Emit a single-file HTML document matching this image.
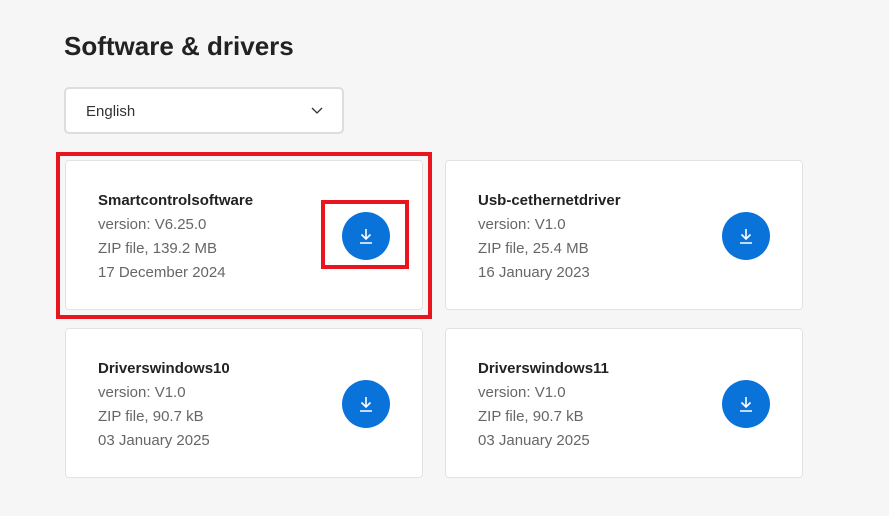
<!DOCTYPE html>
<html><head><style>
body{margin:0;width:889px;height:516px;background:#f6f6f6;font-family:"Liberation Sans",sans-serif;position:relative;overflow:hidden}
h1{position:absolute;left:64px;top:31px;margin:0;font-size:26px;font-weight:bold;color:#222}
.sel{position:absolute;left:64px;top:87px;width:280px;height:47px;background:#fff;border:2px solid #ddd;border-radius:5px;box-sizing:border-box}
.sel span{position:absolute;left:20px;top:14px;font-size:15px;color:#333}
.sel svg{position:absolute;left:244px;top:17px}
.card{position:absolute;width:358px;height:150px;background:#fff;border:1.5px solid #e2e2e2;border-radius:4px;box-sizing:border-box}
.t{position:absolute;left:32px;top:31px;font-size:15px;font-weight:bold;color:#222}
.l{position:absolute;left:32px;font-size:15px;color:#666}
.b{position:absolute;left:276px;top:51px;width:48px;height:48px;border-radius:50%;background:#0a73da}
.b svg{position:absolute;left:14px;top:14px}
.red{position:absolute;border:4px solid #e8151f;box-sizing:border-box}
</style></head><body>
<h1>Software &amp; drivers</h1>
<div class="sel"><span>English</span><svg width="14" height="10"><path d="M2 2l5 5 5-5" stroke="#333" stroke-width="1.3" fill="none"/></svg></div>

<div class="card" style="left:65px;top:160px"><div class="t">Smartcontrolsoftware</div><div class="l" style="top:55px">version: V6.25.0</div><div class="l" style="top:79px">ZIP file, 139.2 MB</div><div class="l" style="top:103px">17 December 2024</div><div class="b"><svg width="20" height="20"><path d="M10 3v10M5.5 8.5L10 13l4.5-4.5M4 17h12" stroke="#fff" stroke-width="1.6" fill="none"/></svg></div></div>
<div class="card" style="left:445px;top:160px"><div class="t">Usb-cethernetdriver</div><div class="l" style="top:55px">version: V1.0</div><div class="l" style="top:79px">ZIP file, 25.4 MB</div><div class="l" style="top:103px">16 January 2023</div><div class="b"><svg width="20" height="20"><path d="M10 3v10M5.5 8.5L10 13l4.5-4.5M4 17h12" stroke="#fff" stroke-width="1.6" fill="none"/></svg></div></div>
<div class="card" style="left:65px;top:328px"><div class="t">Driverswindows10</div><div class="l" style="top:55px">version: V1.0</div><div class="l" style="top:79px">ZIP file, 90.7 kB</div><div class="l" style="top:103px">03 January 2025</div><div class="b"><svg width="20" height="20"><path d="M10 3v10M5.5 8.5L10 13l4.5-4.5M4 17h12" stroke="#fff" stroke-width="1.6" fill="none"/></svg></div></div>
<div class="card" style="left:445px;top:328px"><div class="t">Driverswindows11</div><div class="l" style="top:55px">version: V1.0</div><div class="l" style="top:79px">ZIP file, 90.7 kB</div><div class="l" style="top:103px">03 January 2025</div><div class="b"><svg width="20" height="20"><path d="M10 3v10M5.5 8.5L10 13l4.5-4.5M4 17h12" stroke="#fff" stroke-width="1.6" fill="none"/></svg></div></div>

<div class="red" style="left:56px;top:152px;width:376px;height:167px"></div>
<div class="red" style="left:321px;top:200px;width:88px;height:69px"></div>
</body></html>
